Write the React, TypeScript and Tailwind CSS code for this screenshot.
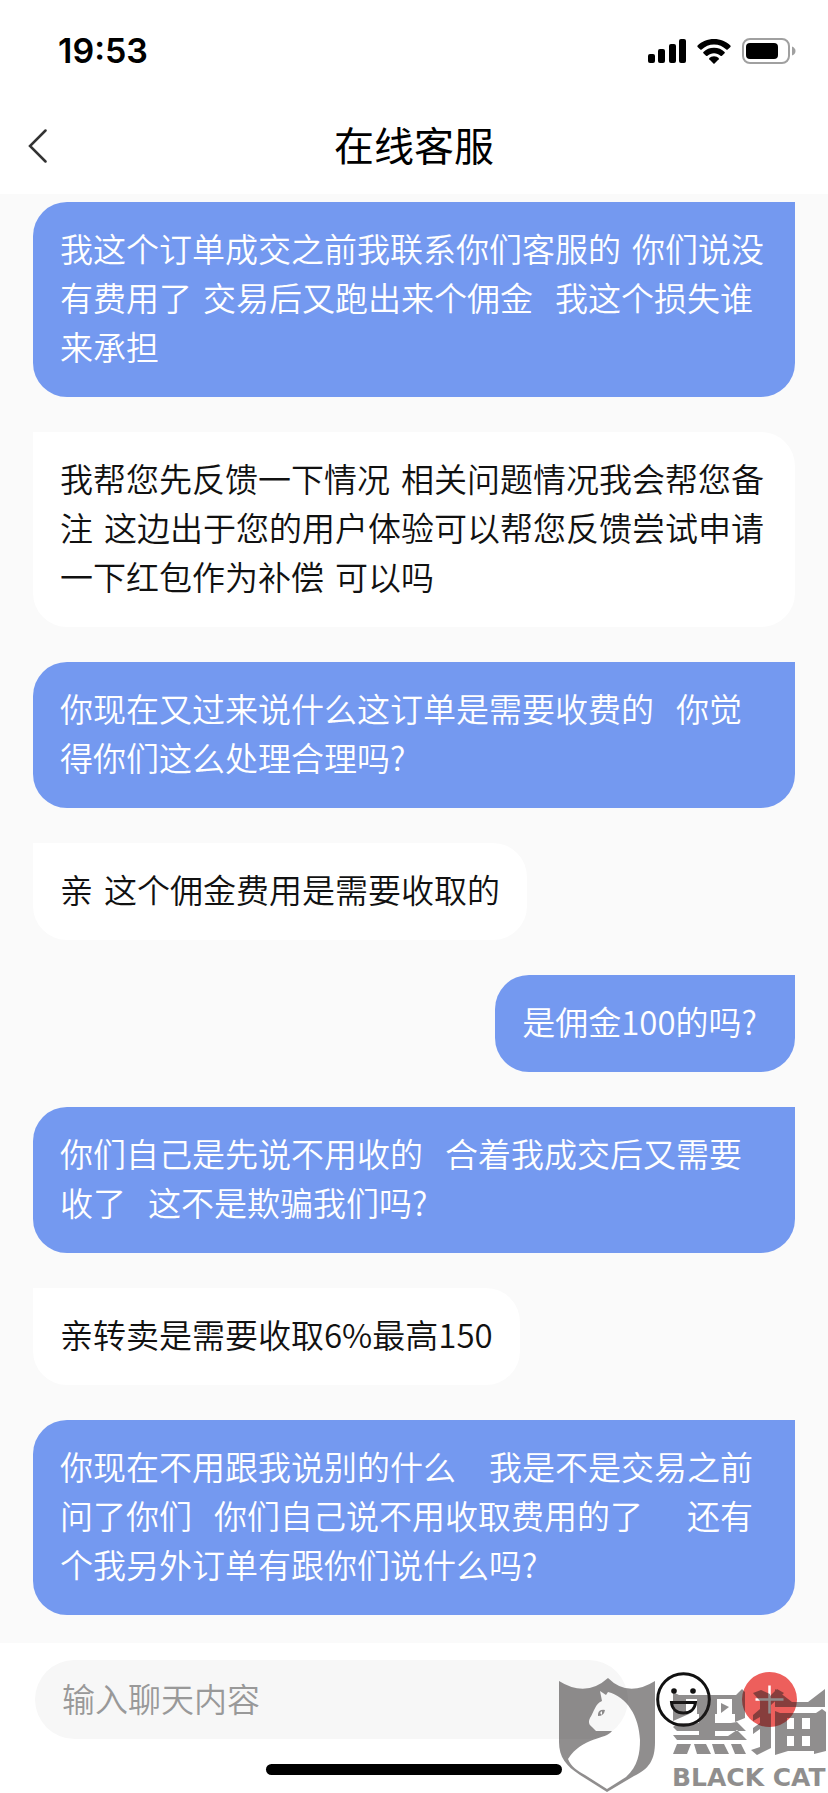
import React, { useState } from "react";

type Message = {
  from: "me" | "agent";
  text: string;
};

const messages: Message[] = [
  { from: "me", text: "我这个订单成交之前我联系你们客服的 你们说没有费用了 交易后又跑出来个佣金  我这个损失谁来承担" },
  { from: "agent", text: "我帮您先反馈一下情况 相关问题情况我会帮您备注 这边出于您的用户体验可以帮您反馈尝试申请一下红包作为补偿 可以吗" },
  { from: "me", text: "你现在又过来说什么这订单是需要收费的  你觉得你们这么处理合理吗?" },
  { from: "agent", text: "亲 这个佣金费用是需要收取的" },
  { from: "me", text: "是佣金100的吗? " },
  { from: "me", text: "你们自己是先说不用收的  合着我成交后又需要收了  这不是欺骗我们吗?" },
  { from: "agent", text: "亲转卖是需要收取6%最高150" },
  { from: "me", text: "你现在不用跟我说别的什么   我是不是交易之前问了你们  你们自己说不用收取费用的了    还有个我另外订单有跟你们说什么吗?" },
];

// Typed spaces are shown a third of an em wide and never collapse
const keepSpaces = (text: string) => text.replace(/ /g, "\u2004");

const StatusBar = () => (
  <div className="flex h-[98px] items-center justify-between pt-1 pl-[58px] pr-8">
    <span className="font-['Inter',sans-serif] text-[34px] leading-10 font-semibold">19:53</span>
    <div className="flex items-center gap-[11px]">
      <svg width="38" height="24" viewBox="0 0 38 24" aria-hidden="true">
        <rect x="0" y="15" width="7" height="9" rx="2" />
        <rect x="10" y="10" width="7" height="14" rx="2" />
        <rect x="21" y="5" width="7" height="19" rx="2" />
        <rect x="31" y="0" width="7" height="24" rx="2" />
      </svg>
      <svg width="34" height="25" viewBox="0 0 34 25" aria-hidden="true">
        <path d="M17 0C23.500 0 29.200 2.500 33.400 6.500Q34 7.200 33.400 7.900L30.700 10.500Q30 11 29.300 10.500C26 7.400 21.800 5.500 17 5.500S8 7.400 4.700 10.500Q4 11 3.300 10.500L.6 7.900Q0 7.200.6 6.500C4.800 2.500 10.500 0 17 0Z" />
        <path d="M17 8.800C21.200 8.800 24.900 10.400 27.600 12.900Q28.200 13.600 27.600 14.200L25 16.700Q24.200 17.200 23.500 16.700C21.700 15.100 19.500 14.200 17 14.200S12.300 15.100 10.500 16.700Q9.800 17.200 9 16.700L6.400 14.200Q5.800 13.600 6.400 12.900C9.100 10.400 12.800 8.800 17 8.800Z" />
        <path d="M17 17.300Q20.100 17.300 21.700 19Q22.100 19.600 21.700 20.200L17.600 24.400Q17 24.900 16.400 24.400L12.300 20.200Q11.900 19.600 12.300 19Q13.900 17.300 17 17.300Z" />
      </svg>
      <svg width="54" height="26" viewBox="0 0 54 26" aria-hidden="true">
        <rect x="1" y="1" width="46" height="24" rx="7" fill="none" stroke="#a0a0a0" strokeWidth="2" />
        <rect x="4" y="5" width="32" height="16" rx="4" />
        <path d="M50 8.500Q53.500 10 53.500 13T50 17.500Z" fill="#a0a0a0" />
      </svg>
    </div>
  </div>
);

const Header = () => (
  <header className="grid h-24 grid-cols-[96px_1fr_96px] items-center">
    <button type="button" aria-label="返回" className="flex h-24 items-center pl-7">
      <svg width="20" height="34" viewBox="0 0 20 34" fill="none" stroke="#333" strokeWidth="2.500" strokeLinecap="round" aria-hidden="true">
        <path d="M17.500 1.500L2 17L17.500 32.500" />
      </svg>
    </button>
    <h1 className="pb-1 text-center text-[40px] leading-[56px]">在线客服</h1>
  </header>
);

const Bubble = ({ from, text }: Message) => (
  <li
    className={`max-w-full px-[27px] pt-[22px] pb-[26px] text-[33px] leading-[49px] font-[350] whitespace-pre-wrap ${
      from === "me"
        ? "self-end rounded-[34px] rounded-tr-none bg-[#7499f0] text-white"
        : "self-start rounded-[34px] rounded-tl-none bg-white text-[#111]"
    }`}
  >
    {keepSpaces(text)}
  </li>
);

const Watermark = () => (
  <div className="pointer-events-none absolute right-0 bottom-0 opacity-50">
    <svg width="270" height="115" viewBox="0 0 270 115" fill="#231f20" role="img" aria-label="黑猫 BLACK CAT">
      {/* shield with the cat cut out of it */}
      <path
        fillRule="evenodd"
        d="M1 3Q28 20 50 0Q70 20 97 3V64C97 82 91 91 76 98L49 114L22 97C8 88 1 79 1 64ZM42 13L44 23C37 26 36 34 32 40C30 44 31 47 34 49L38 53H54C48 62 25 58 10 81C13 89 20 93 27 97L49 111L68 99C80 88 82 75 82 62C81 38 69 19 50 14L48 17Z"
      />
      <path d="M40 36Q41 31 47 32Q46 38 40 38Z" />
      <path fill="#fff" d="M42 35L44 33V37Z" />
      <g>
        <path fillRule="evenodd" d="M115 14L121 17H178L184 11L187 14V40L177 44V36H157V45H173L179 44L188 53H157V58H170L179 52L189 62H119L115 57H141V53H119L115 49L120 45H141V36H131L115 43ZM128 21V36H139V21ZM159 21V36H174V21Z" />
        <path d="M163 25L171 29L163 35Z" />
        <path d="M119 66H133L129 76H115ZM136 66H148L153 76H139ZM154 66H166L171 76H157ZM173 66H183L188 76H177Z" />
        <path d="M195 15L203 12L212 16V18L219 11L226 15L213 27V70L199 77L193 72L202 69V51L195 56V50L202 45V39L195 43V37L202 31V23Z" />
        <path fillRule="evenodd" d="M217 11L234 24H250L267 11V29H217ZM217 33L222 35H258L264 31L268 34V73L256 76V73H230L217 77ZM229 40V51H236V40ZM244 40V51H252V40ZM229 58V68H236V58ZM244 58V68H252V58Z" />
      </g>
      <text x="114" y="108" fontFamily="DejaVu Sans, sans-serif" fontSize="25" fontWeight="700">BLACK CAT</text>
    </svg>
  </div>
);

const Composer = () => {
  const [draft, setDraft] = useState("");

  return (
    <footer className="relative h-[150px] bg-white pt-[17px]">
      <div className="flex items-center pr-[31px] pl-[35px]">
        <input
          type="text"
          aria-label="输入聊天内容"
          placeholder="输入聊天内容"
          value={draft}
          onChange={(e) => setDraft(e.target.value)}
          className="h-[79px] min-w-0 flex-1 rounded-full bg-[#f7f7f7] px-[27px] pb-1 text-[33px] font-[350] outline-none placeholder:text-[#999]"
        />
        <button type="button" aria-label="表情" className="ml-7">
          <svg width="55" height="55" viewBox="0 0 55 55" fill="none" stroke="#111" strokeWidth="3" aria-hidden="true">
            <circle cx="27.500" cy="27.500" r="25.800" />
            <circle cx="18" cy="19" r="2.800" fill="#111" stroke="none" />
            <circle cx="37" cy="19" r="2.800" fill="#111" stroke="none" />
            <path d="M15.500 30.500H39.500C39 37 34.500 41 27.500 41S16 37 15.500 30.500Z" />
          </svg>
        </button>
        <button type="button" aria-label="更多" className="ml-[31px]">
          <svg width="55" height="55" viewBox="0 0 55 55" aria-hidden="true">
            <circle cx="27.500" cy="27.500" r="27.500" fill="#ed5f5c" />
            <path d="M13.500 27.500H41.500M27.500 13.500V41.500" stroke="#fff" strokeWidth="2.500" />
          </svg>
        </button>
      </div>
      <div className="mx-auto mt-[25px] h-[11px] w-[296px] rounded-full bg-black" />
      <Watermark />
    </footer>
  );
};

const App = () => {
  return (
    <div className="flex min-h-screen flex-col bg-white font-['Noto_Sans_CJK_SC',sans-serif] text-black">
      <StatusBar />
      <Header />
      <main className="flex-1 bg-[#fafafa] px-[33px] pt-2 pb-7">
        <ul className="flex flex-col gap-[35px]">
          {messages.map((message, index) => (
            <Bubble key={index} {...message} />
          ))}
        </ul>
      </main>
      <Composer />
    </div>
  );
};

export default App;
